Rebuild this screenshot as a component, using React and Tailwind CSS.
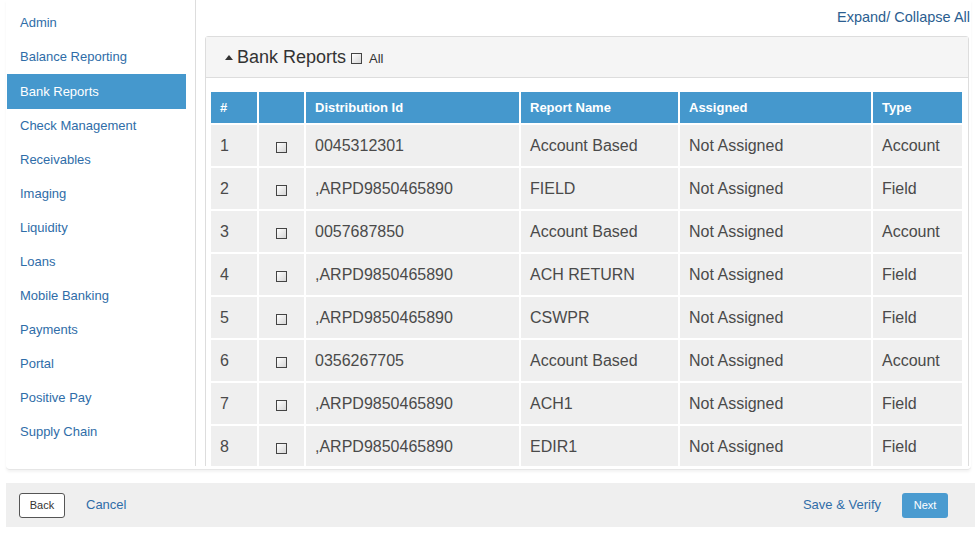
import React from 'react';

const menu = [
  'Admin',
  'Balance Reporting',
  'Bank Reports',
  'Check Management',
  'Receivables',
  'Imaging',
  'Liquidity',
  'Loans',
  'Mobile Banking',
  'Payments',
  'Portal',
  'Positive Pay',
  'Supply Chain',
];

const rows = [
  ['1', '0045312301', 'Account Based', 'Not Assigned', 'Account'],
  ['2', ',ARPD9850465890', 'FIELD', 'Not Assigned', 'Field'],
  ['3', '0057687850', 'Account Based', 'Not Assigned', 'Account'],
  ['4', ',ARPD9850465890', 'ACH RETURN', 'Not Assigned', 'Field'],
  ['5', ',ARPD9850465890', 'CSWPR', 'Not Assigned', 'Field'],
  ['6', '0356267705', 'Account Based', 'Not Assigned', 'Account'],
  ['7', ',ARPD9850465890', 'ACH1', 'Not Assigned', 'Field'],
  ['8', ',ARPD9850465890', 'EDIR1', 'Not Assigned', 'Field'],
];

function Box() {
  return (
    <span className="inline-block w-[11px] h-[11px] border border-[#444] bg-gradient-to-br from-white to-[#d6d6d6] align-middle" />
  );
}

export default function App() {
  return (
    <div className="w-[975px] h-[536px] bg-white overflow-hidden font-['Liberation_Sans',Arial,sans-serif]">
      <div className="ml-[6px] w-[965px] h-[470px] flex border-b border-[#e6e6e6] shadow-[0_2px_3px_rgba(0,0,0,0.05)] rounded-b">
        {/* sidebar */}
        <div className="w-[190px] h-[466px] border-r border-[#ddd] pt-[6px] pl-px">
          {menu.map((m) => (
            <div
              key={m}
              className={`w-[179px] flex items-center px-[13px] text-[13px] ${
                m === 'Bank Reports' ? 'bg-[#4598cd] text-white h-[35px]' : 'text-[#2f6da8] h-[34px]'
              }`}
            >
              {m}
            </div>
          ))}
        </div>

        {/* content */}
        <div className="flex-1 h-[466px] overflow-hidden pl-[9px]">
          <div className="h-[36px] flex justify-end items-start pt-[7px] pr-[1px] text-[14.5px] text-[#2b5e90]">
            Expand/ Collapse All
          </div>
          <div className="w-[764px] border border-[#ddd] rounded-t-[3px]">
            <div className="h-[41px] bg-[#f5f5f5] border-b border-[#ddd] flex items-center pl-[19px] text-[#333]">
              <svg width="8" height="5" viewBox="0 0 8 5" className="mr-[4px]">
                <path d="M0 5 L4 0 L8 5 Z" fill="#333" />
              </svg>
              <span className="text-[18px]">Bank Reports</span>
              <span className="ml-[5px] mt-[3px] flex items-center">
                <Box />
              </span>
              <span className="ml-[7px] mt-[3px] text-[13px]">All</span>
            </div>
            <div className="pt-[14px] px-[5px]">
              <table className="w-[751px] border-collapse table-fixed text-left">
                <colgroup>
                  <col className="w-[47px]" />
                  <col className="w-[47px]" />
                  <col className="w-[215px]" />
                  <col className="w-[159px]" />
                  <col className="w-[193px]" />
                  <col className="w-[90px]" />
                </colgroup>
                <thead>
                  <tr className="h-[32px] bg-[#4598cd] text-white text-[13px] font-bold">
                    <th className="border-r-2 border-white pl-[9px]">#</th>
                    <th className="border-r-2 border-white"></th>
                    <th className="border-r-2 border-white pl-[9px]">Distribution Id</th>
                    <th className="border-r-2 border-white pl-[9px]">Report Name</th>
                    <th className="border-r-2 border-white pl-[9px]">Assigned</th>
                    <th className="pl-[9px]">Type</th>
                  </tr>
                </thead>
                <tbody className="text-[16px] text-[#4a4a4a]">
                  {rows.map((r) => (
                    <tr key={r[0]} className="h-[43px] bg-[#efefef] border-t-2 border-white">
                      <td className="border-r-2 border-white pl-[9px]">{r[0]}</td>
                      <td className="border-r-2 border-white text-center">
                        <span className="relative top-[1px]">
                          <Box />
                        </span>
                      </td>
                      <td className="border-r-2 border-white pl-[9px]">{r[1]}</td>
                      <td className="border-r-2 border-white pl-[9px]">{r[2]}</td>
                      <td className="border-r-2 border-white pl-[9px]">{r[3]}</td>
                      <td className="pl-[9px]">{r[4]}</td>
                    </tr>
                  ))}
                </tbody>
              </table>
            </div>
          </div>
        </div>
      </div>

      {/* footer */}
      <div className="mt-[13px] ml-[6px] h-[44px] bg-[#efefef] flex items-center px-[13px]">
        <button className="w-[46px] h-[25px] border border-[#555] rounded-[3px] bg-white text-[11px] text-[#333]">
          Back
        </button>
        <span className="ml-[21px] text-[13px] text-[#2f6da8]">Cancel</span>
        <span className="ml-auto text-[13px] text-[#2f6da8]">Save &amp; Verify</span>
        <button className="ml-[21px] mr-[14px] w-[46px] h-[25px] rounded-[3px] bg-[#4a9bd0] text-[11px] text-white">
          Next
        </button>
      </div>
    </div>
  );
}
